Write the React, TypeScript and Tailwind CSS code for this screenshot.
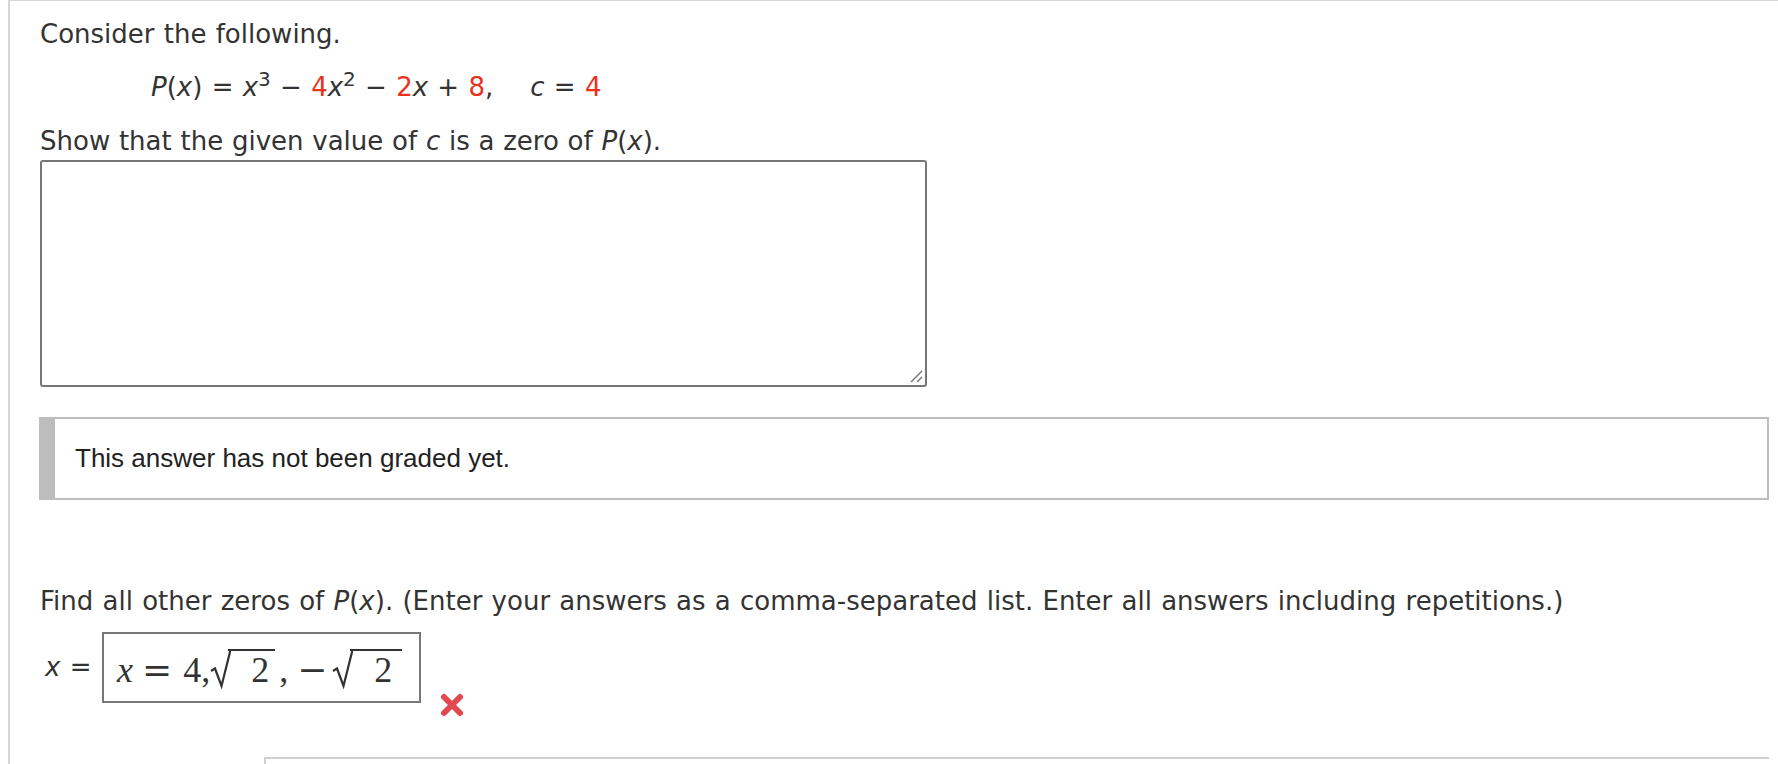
const verdana = { fontFamily: '"DejaVu Sans", Verdana, sans-serif' };
const wideSerif = { fontFamily: '"DejaVu Serif", serif' };

function Sqrt({ padLeft, padRight, children }: { padLeft: string; padRight: string; children: React.ReactNode }) {
    return (
        <span className="inline-flex items-start">
            <svg width="21" height="40" viewBox="0 0 21 40" className="shrink-0">
                <path d="M1 22 L5 19.5 L11.5 37 L20.5 1" fill="none" stroke="#333" strokeWidth="2.2" />
            </svg>
            <span className={`-ml-[3px] border-t-[2px] border-[#333] pt-[4px] leading-[30px] ${padLeft} ${padRight}`}>{children}</span>
        </span>
    );
}

export default function App() {
    return (
        <div className="bg-white min-h-[764px] w-[1778px] pl-[8px] text-[#333] [word-spacing:1px]" style={verdana}>
            <div className="border-l-[2px] border-t border-[#d6d6d6] pl-[30px] pr-[9px] pt-[16px] min-h-[764px]">
                {/* Question statement */}
                <div className="text-[26px] leading-[34px]">Consider the following.</div>

                <div className="text-[26px] leading-[34px] mt-[19px] ml-[111px] whitespace-pre">
                    <i>P</i>(<i>x</i>) = <i>x</i>
                    <sup className="text-[20px]">3</sup> − <span className="text-[#e8321e]">4</span>
                    <i>x</i>
                    <sup className="text-[20px]">2</sup> − <span className="text-[#e8321e]">2</span>
                    <i>x</i> + <span className="text-[#e8321e]">8</span>,{"    "}
                    <i>c</i> = <span className="text-[#e8321e]">4</span>
                </div>

                <div className="text-[26px] leading-[34px] mt-[20px] [word-spacing:0.5px]">
                    Show that the given value of <i>c</i> is a zero of <i>P</i>(<i>x</i>).
                </div>

                {/* Free response box */}
                <div className="relative mt-[2px] w-[887px] h-[227px] border-[2px] border-[#767676] rounded-[3px]">
                    <svg className="absolute right-[2px] bottom-[2px]" width="14" height="14" viewBox="0 0 14 14">
                        <line x1="2" y1="13" x2="13" y2="2" stroke="#777" strokeWidth="1.5" />
                        <line x1="8" y1="13" x2="13" y2="8" stroke="#777" strokeWidth="1.5" />
                    </svg>
                </div>

                {/* Grading status */}
                <div className="mt-[30px] -ml-[1px] h-[83px] border-[2px] border-l-[16px] border-[#bdbdbd] flex items-center pl-[20px]">
                    <span
                        className="text-[26px] text-[#222] [word-spacing:0px]"
                        style={{ fontFamily: '"Liberation Sans", Arial, sans-serif' }}
                    >
                        This answer has not been graded yet.
                    </span>
                </div>

                <div className="text-[26px] leading-[34px] mt-[84px] whitespace-nowrap">
                    Find all other zeros of <i>P</i>(<i>x</i>). (Enter your answers as a comma-separated list. Enter all
                    answers including repetitions.)
                </div>

                {/* Answer row */}
                <div className="flex items-start mt-[14px] h-[71px]">
                    <div className="h-[71px] flex items-center pl-[5px] w-[62px] text-[26px]">
                        <i>x</i>&nbsp;=
                    </div>
                    <div
                        className="h-[71px] w-[319px] border-[2px] border-[#777] flex items-start pt-[15px] pl-[13px] text-[36px] text-[#333] [word-spacing:0px]"
                        style={{ fontFamily: '"Liberation Serif", "Times New Roman", serif' }}
                    >
                        <span className="leading-[30px] pt-[6px] italic">x</span>
                        <span className="leading-[30px] pt-[6px] ml-[9px]" style={wideSerif}>
                            =
                        </span>
                        <span className="leading-[30px] pt-[6px] ml-[11px]">4,</span>
                        <Sqrt padLeft="pl-[23px]" padRight="pr-[6px]">2</Sqrt>
                        <span className="leading-[30px] pt-[6px] ml-[4px]">,</span>
                        <span className="leading-[30px] pt-[6px] ml-[9px]" style={wideSerif}>
                            −
                        </span>
                        <span className="ml-[5px]">
                            <Sqrt padLeft="pl-[24px]" padRight="pr-[10px]">2</Sqrt>
                        </span>
                    </div>
                    <svg className="ml-[18px] mt-[60px] shrink-0" width="26" height="26" viewBox="0 0 26 26">
                        <path d="M5 5 L21 21 M21 5 L5 21" stroke="#e2484f" strokeWidth="6" strokeLinecap="round" />
                    </svg>
                </div>

                {/* Next part */}
                <div className="mt-[54px] ml-[224px] h-[20px] border-l-[2px] border-t-[2px] border-[#cfcfcf]" />
            </div>
        </div>
    );
}
